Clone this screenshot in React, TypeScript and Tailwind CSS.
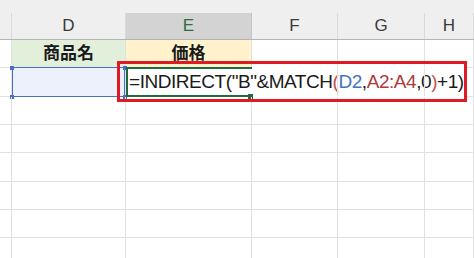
const cols = [12, 114, 126, 86, 87, 49];
const letters = ['', 'D', 'E', 'F', 'G', 'H'];
const rowHeights = [28, 29, 28, 28, 29, 28, 28, 28];

function HeaderRow() {
  return (
    <div className="flex h-[27px] border-b border-[#b4b4b4] bg-[#efefef]">
      {cols.map((w, i) => (
        <div
          key={i}
          style={{ width: w }}
          className={
            'flex shrink-0 items-center justify-center border-r text-[17px] ' +
            (i === 2 ? 'border-[#c4c4c4] bg-[#d3d3d3] text-[#2e6b45]' : 'border-[#dadada] text-[#3a3a3a]')
          }
        >
          {letters[i]}
        </div>
      ))}
    </div>
  );
}

function Cell({ w, className = '', children }: { w: number; className?: string; children?: React.ReactNode }) {
  return (
    <div style={{ width: w }} className={'relative flex shrink-0 items-center justify-center border-r border-[#e1e1e1] ' + className}>
      {children}
    </div>
  );
}

export default function App() {
  return (
    <div className="relative h-[258px] w-[474px] overflow-hidden bg-white" style={{ fontFamily: '"Liberation Sans", "Noto Sans CJK JP", sans-serif' }}>
      <div className="h-[13px] bg-[#efefef]" />
      <HeaderRow />

      {rowHeights.map((h, r) => (
        <div key={r} style={{ height: h }} className="flex border-b border-[#e1e1e1]">
          <Cell w={cols[0]} className="border-[#a8a8a8]" />
          {r === 0 && (
            <>
              <Cell w={cols[1]} className="bg-[#e2efda] text-[17px] font-bold text-[#1a1a1a]">
                商品名
              </Cell>
              <Cell w={cols[2]} className="border-[#5f7a63] bg-[#fff2cc] text-[17px] font-bold text-[#1a1a1a]">
                価格
              </Cell>
            </>
          )}
          {r === 1 && (
            <>
              <Cell w={cols[1]} className="border-0 bg-[#edf1fb]">
                <div className="absolute -top-px -bottom-px left-0 right-0 border border-[#4a6fc7]" />
                <span className="absolute -top-[2px] -left-[2px] h-[4px] w-[4px] bg-[#4a6fc7]" />
                <span className="absolute -top-[2px] -right-[2px] h-[4px] w-[4px] bg-[#4a6fc7]" />
                <span className="absolute -bottom-[3px] -left-[2px] h-[4px] w-[4px] bg-[#4a6fc7]" />
                <span className="absolute -bottom-[3px] -right-[2px] h-[4px] w-[4px] bg-[#4a6fc7]" />
              </Cell>
              <div style={{ width: cols[2] }} className="relative shrink-0">
                <div className="absolute -top-px -bottom-px left-0 w-[340px] bg-white">
                  <div className="absolute left-0 top-0 h-[2px] w-[126px] bg-[#1f6b3f]" />
                  <div className="absolute left-0 top-0 bottom-0 w-[2px] bg-[#1f6b3f]" />
                  <div className="absolute left-0 bottom-0 h-[2px] w-[124px] bg-[#1f6b3f]" />
                  <span className="absolute -bottom-[2px] left-[122px] h-[5px] w-[5px] bg-[#1f6b3f]" />
                  <div className="flex h-full items-center whitespace-nowrap pl-[3px] text-[19px] tracking-[-0.45px] text-[#1a1a1a]">
                    <span>=INDIRECT("B"&amp;MATCH</span>
                    <span className="text-[#c0504d]">(</span>
                    <span className="text-[#4472c4]">D2</span>
                    <span>,</span>
                    <span className="text-[#b03a3a]">A2:A4</span>
                    <span>,0</span>
                    <span className="text-[#c0504d]">)</span>
                    <span>+1)</span>
                    <span className="ml-[2px] h-[22px] w-[1.5px] bg-[#1a1a1a]" />
                  </div>
                </div>
              </div>
            </>
          )}
          {r > 1 && (
            <>
              <Cell w={cols[1]} />
              <Cell w={cols[2]} />
            </>
          )}
          <Cell w={cols[3]} />
          <Cell w={cols[4]} />
          <Cell w={cols[5]} />
        </div>
      ))}

      <div className="absolute left-[117px] top-[61px] h-[41px] w-[350px] border-[3px] border-[#df1b22]" />
    </div>
  );
}
